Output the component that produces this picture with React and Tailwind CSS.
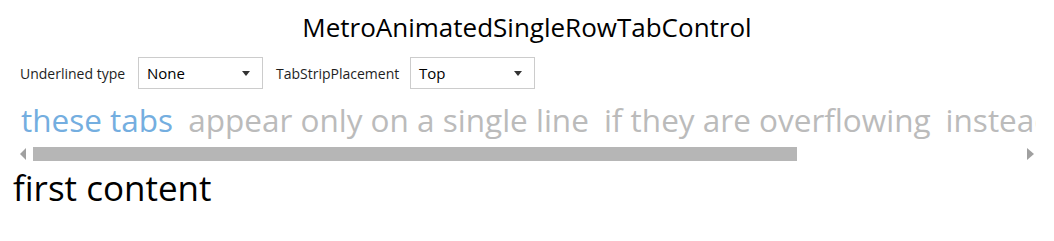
const tabs = [
  "these tabs",
  "appear only on a single line",
  "if they are overflowing",
  "instead of wrapping",
];

function Combo({ value }) {
  return (
    <div className="flex h-[32px] w-[125px] items-center justify-between border border-[#cccccc] bg-white pl-[8px] pr-[12px] text-[15px] text-black">
      <span>{value}</span>
      <svg width="8" height="5" viewBox="0 0 8 5">
        <path d="M0 0H8L4 5Z" fill="#333333" />
      </svg>
    </div>
  );
}

export default function App() {
  return (
    <div className="h-[241px] w-[1054px] overflow-hidden bg-white font-['Open_Sans',sans-serif]">
      <h1 className="pt-[9px] text-center text-[26px] leading-[36px] text-black">
        MetroAnimatedSingleRowTabControl
      </h1>

      <div className="mt-[12px] flex items-center pl-[20px] text-[14px] text-[#1e1e1e]">
        <span className="w-[118px]">Underlined type</span>
        <Combo value="None" />
        <span className="ml-[13px] w-[134px]">TabStripPlacement</span>
        <Combo value="Top" />
      </div>

      {/* Tab strip, clipped on the right */}
      <div className="mt-[9px] w-[1036px] overflow-hidden pl-[21px]">
        <div className="flex gap-[15px] whitespace-nowrap text-[31.5px] leading-[44px]">
          {tabs.map((t, i) => (
            <span key={i} className={i === 0 ? "text-[#74aee0]" : "text-[#bbbbbb]"}>
              {t}
            </span>
          ))}
        </div>
      </div>

      {/* Horizontal scrollbar */}
      <div className="mt-[5px] flex h-[14px] w-[1034px] items-center pl-[20px]">
        <svg width="6" height="12" viewBox="0 0 6 12">
          <path d="M6 0V12L0 6Z" fill="#a0a0a0" />
        </svg>
        <div className="ml-[7px] h-[14px] w-[764px] bg-[#b6b6b6]" />
        <div className="flex-1" />
        <svg width="7" height="12" viewBox="0 0 7 12">
          <path d="M0 0V12L7 6Z" fill="#a0a0a0" />
        </svg>
      </div>

      <div className="mt-[3px] pl-[13px] text-[35px] leading-[48px] text-black">first content</div>
    </div>
  );
}
